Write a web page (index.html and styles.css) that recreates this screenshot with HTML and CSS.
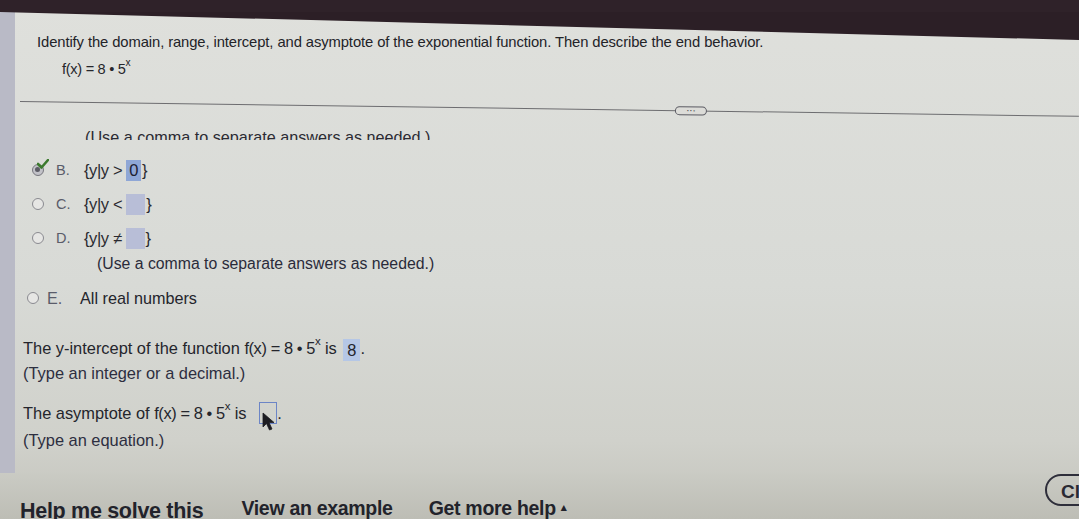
FILE: index.html
```html
<!DOCTYPE html>
<html>
<head>
<meta charset="utf-8">
<link rel="stylesheet" href="styles.css">
</head>
<body>
<div class="screen">
  <div class="topbar"></div>
  <div class="layout">
    <div class="strip"></div>
    <div class="main">
      <section class="question">
        <p class="prompt">Identify the domain, range, intercept, and asymptote of the exponential function. Then describe the end behavior.</p>
        <p class="func">f(x) = 8 &bull; 5<sup>x</sup></p>
      </section>
      <div class="divider"><span class="more">&bull; &bull; &bull;</span></div>
      <section class="answers">
        <div class="cutwrap"><p class="hint cut">(Use a comma to separate answers as needed.)</p></div>
        <div class="choice first">
          <span class="radio checked"><span class="dot"></span>
            <svg class="check" viewBox="0 0 12 10" width="12" height="10"><path d="M1 5 L4.5 8.5 L11 1" fill="none" stroke="#3c7a2e" stroke-width="2.6" stroke-linecap="round" stroke-linejoin="round"/></svg>
          </span>
          <span class="letter">B.</span>
          <span class="set">{y|y &gt; <span class="box filled">0</span>}</span>
        </div>
        <div class="choice">
          <span class="radio"></span>
          <span class="letter">C.</span>
          <span class="set">{y|y &lt; <span class="box empty"></span>}</span>
        </div>
        <div class="choice">
          <span class="radio"></span>
          <span class="letter">D.</span>
          <span class="set">{y|y &ne; <span class="box empty"></span>}</span>
        </div>
        <p class="hint big">(Use a comma to separate answers as needed.)</p>
        <div class="choice e">
          <span class="radio"></span>
          <span class="letter">E.</span>
          <span class="plain">All real numbers</span>
        </div>
      </section>
      <section class="part">
        <p class="line">The y-intercept of the function <span class="eq">f(x) = 8 &bull; 5<sup>x</sup></span> is <span class="box ans">8</span>.</p>
        <p class="line sub">(Type an integer or a decimal.)</p>
        <p class="line gap">The asymptote of <span class="eq">f(x) = 8 &bull; 5<sup>x</sup></span> is <span class="box input"><svg class="cursor" viewBox="0 0 14 20" width="14" height="20"><path d="M1 1 L1 15 L4.5 11.5 L7.5 18 L10 17 L7 10.5 L12 10.5 Z" fill="#1d1d22" stroke="#1d1d22" stroke-width="0.8"/></svg></span>.</p>
        <p class="line sub">(Type an equation.)</p>
      </section>
    </div>
  </div>
  <footer class="footer">
    <div class="links">
      <span class="link first">Help me solve this</span>
      <span class="link second">View an example</span>
      <span class="link">Get more help <span class="tri">&#9652;</span></span>
    </div>
    <span class="clear">Cl</span>
  </footer>
</div>
</body>
</html>
```
FILE: styles.css
```css
* { box-sizing: border-box; }
html, body { margin: 0; padding: 0; }
body {
  width: 1079px;
  height: 519px;
  overflow: hidden;
  font-family: "Liberation Sans", Arial, sans-serif;
  color: #26262b;
}
.screen {
  position: relative;
  width: 1079px;
  height: 519px;
  background: linear-gradient(180deg, #dfe0dc 0%, #d8dad6 55%, #d0d1cb 85%, #c3c3bb 100%);
  display: flex;
  flex-direction: column;
  overflow: hidden;
}
.topbar {
  height: 12px;
  background: #2f2229;
  position: relative;
  flex: none;
}
.topbar::after {
  content: "";
  position: absolute;
  left: 0;
  top: 12px;
  width: 1079px;
  height: 28px;
  background: #2c1f26;
  clip-path: polygon(0 0, 100% 0, 100% 100%);
}
.layout {
  display: flex;
  flex: 1;
  min-height: 0;
}
.strip {
  width: 15px;
  flex: none;
  background: #b9bac6;
}
.main {
  flex: 1;
  display: flex;
  flex-direction: column;
}
p { margin: 0; }
.question { padding: 22px 0 0 22px; }
.prompt {
  font-size: 14.8px;
  letter-spacing: -0.1px;
  color: #232328;
}
.func {
  margin: 11px 0 0 25px;
  font-size: 14.6px;
  letter-spacing: -0.3px;
}
sup { font-size: 0.7em; line-height: 0; vertical-align: 0.75em; }
.divider {
  margin-top: 24px;
  height: 1px;
  background: #6d6d70;
  position: relative;
  margin-left: 5px;
  transform: rotate(0.8deg);
  transform-origin: left center;
}
.more {
  position: absolute;
  left: 655px;
  top: -4px;
  width: 32px;
  height: 9px;
  border: 1.5px solid #5a5a62;
  border-radius: 5px;
  background: #dcdcd8;
  font-size: 5px;
  line-height: 6px;
  text-align: center;
  color: #555;
}
.answers { padding: 26px 0 0 17px; }
.cutwrap {
  margin-left: 53px;
  height: 12px;
  overflow: hidden;
}
.hint.cut {
  font-size: 16.2px;
  line-height: 18px;
  color: #2b2b33;
  white-space: nowrap;
}
.choice {
  display: flex;
  align-items: center;
  height: 34px;
}
.choice.first { margin-top: 13px; }
.radio {
  position: relative;
  width: 12px;
  height: 12px;
  border: 1.5px solid #8a8a90;
  border-radius: 50%;
  background: #e6e6e4;
  flex: none;
}
.radio.checked {
  border-color: #77777e;
  background: #c2c2c8;
}
.radio .dot {
  position: absolute;
  left: 2px; top: 2px;
  width: 5px; height: 5px;
  border-radius: 50%;
  background: #5b5b64;
}
.check { position: absolute; left: 4px; top: -6px; }
.letter {
  width: 28px;
  margin-left: 12px;
  font-size: 14.5px;
  color: #5a5c6a;
}
.set {
  font-size: 16.5px;
  color: #2a2a30;
  display: inline-flex;
  align-items: center;
  letter-spacing: -0.4px;
}
.box { display: inline-block; vertical-align: middle; }
.box.filled {
  background: #8fa7d6;
  color: #1d2030;
  padding: 0 3px;
  height: 21px;
  line-height: 21px;
  margin: 0 1px 0 4px;
}
.box.empty {
  width: 19px;
  height: 21px;
  background: #b8bed7;
  margin: 0 1px 0 4px;
}
.hint.big {
  margin: 0 0 0 65px;
  font-size: 15.8px;
  color: #2a2b3a;
}
.choice.e { margin: 11px 0 0 -5px; height: 28px; }
.choice.e .letter { width: 33px; margin-left: 8px; font-size: 16.2px; }
.plain { font-size: 16.2px; color: #24252c; }
.part { padding: 24px 0 0 8px; }
.line { font-size: 16.4px; color: #24252c; line-height: 24px; }
.eq { letter-spacing: -0.4px; }
.line.sub { color: #2d2e40; }
.line.gap { margin-top: 16px; }
.line.gap + .sub { margin-top: 3px; }
.box.ans {
  background: #b5c7e6;
  padding: 0 4px;
  line-height: 22px;
  margin-left: 2px;
}
.box.input {
  position: relative;
  width: 18px;
  height: 22px;
  border: 1.5px solid #6c85c6;
  margin-left: 8px;
  vertical-align: -5px;
}
.cursor { position: absolute; left: 2px; top: 9px; }
.footer {
  height: 46px;
  flex: none;
  position: relative;
  background: linear-gradient(180deg, #cacbc4, #bdbdb5);
}
.links {
  position: absolute;
  left: 20px;
  top: 24px;
  display: flex;
  align-items: flex-start;
  font-size: 19.5px;
  font-weight: bold;
  color: #22232b;
}
.link { letter-spacing: -0.3px; }
.link.first { margin-right: 38px; margin-top: 2px; font-size: 21.5px; }
.link.second { margin-right: 36px; }
.tri { font-size: 11px; vertical-align: 4px; }
.clear {
  position: absolute;
  left: 1045px;
  top: 1px;
  width: 70px;
  height: 32px;
  border: 2px solid #2e2e3a;
  border-radius: 16px;
  padding: 5px 0 0 14px;
  font-size: 19px;
  font-weight: bold;
  color: #2a2a33;
}
```
